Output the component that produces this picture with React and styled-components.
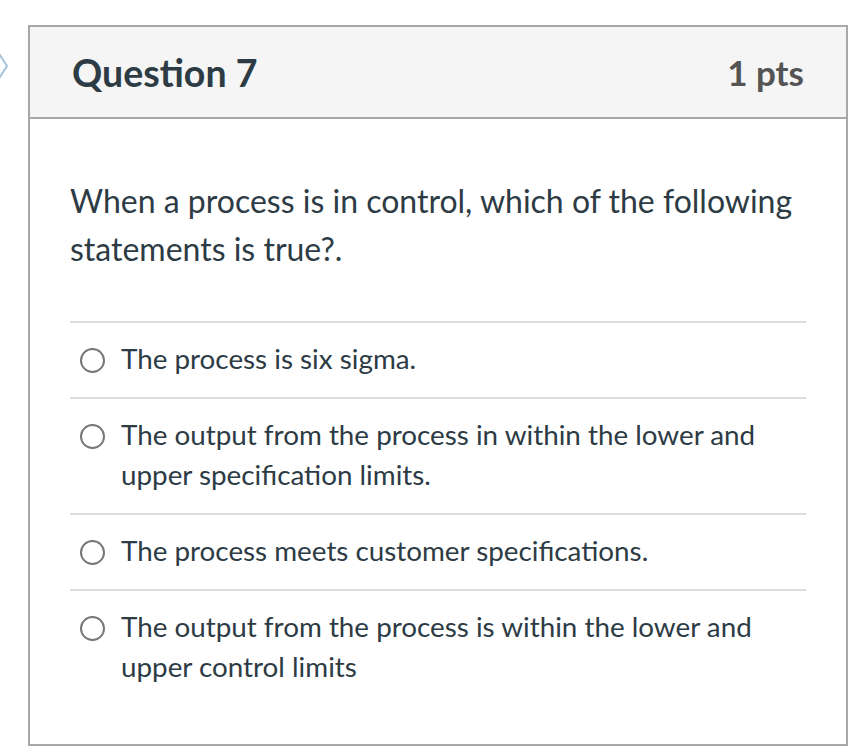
import React from "react";
import styled, { createGlobalStyle } from "styled-components";

const Global = createGlobalStyle`
  html, body { margin: 0; padding: 0; background: #fff; }
  body { font-family: Lato, "Open Sans", sans-serif; color: #2d3b45; }
`;

const Page = styled.div`
  position: relative;
  padding: 25px 0 0 28px;
  width: 854px;
  height: 756px;
  box-sizing: border-box;
`;

const Chevron = styled.svg`
  position: absolute;
  left: -4px;
  top: 50px;
`;

const Card = styled.div`
  width: 820px;
  border: 2px solid #a8a8a8;
  box-sizing: border-box;
`;

const Header = styled.div`
  display: flex;
  align-items: center;
  justify-content: space-between;
  height: 90px;
  padding: 0 42px;
  background: #f5f5f5;
  border-bottom: 2px solid #a8a8a8;
`;

const Title = styled.h2`
  margin: 0;
  font-size: 37.5px;
  font-weight: 700;
  color: #2d3b45;
`;

const Points = styled.div`
  font-size: 35px;
  font-weight: 700;
  color: #545454;
`;

const Body = styled.div`
  padding: 58px 40px 39px;
`;

const QuestionText = styled.p`
  margin: 0 0 48px;
  font-size: 32px;
  line-height: 48px;
`;

const Answer = styled.label`
  display: flex;
  align-items: flex-start;
  gap: 16px;
  padding: 16px 0 18px 10px;
  border-top: 2px solid #dcdcdc;
  font-size: 27.8px;
  line-height: 40px;
`;

const Radio = styled.span`
  flex: none;
  width: 25px;
  height: 25px;
  margin-top: 9px;
  border: 2px solid #777;
  border-radius: 50%;
  box-sizing: border-box;
`;

const answers = [
  "The process is six sigma.",
  "The output from the process in within the lower and upper specification limits.",
  "The process meets customer specifications.",
  "The output from the process is within the lower and upper control limits",
];

export default function App() {
  return (
    <>
      <Global />
      <Page>
        <Chevron width="14" height="32" viewBox="0 0 14 32">
          <polyline points="2,2 11,16 2,30" fill="none" stroke="#a9c4d8" strokeWidth="2" />
        </Chevron>
        <Card>
          <Header>
            <Title>Question 7</Title>
            <Points>1 pts</Points>
          </Header>
          <Body>
            <QuestionText>
              When a process is in control, which of the following statements is true?.
            </QuestionText>
            {answers.map((a) => (
              <Answer key={a}>
                <Radio />
                <span>{a}</span>
              </Answer>
            ))}
          </Body>
        </Card>
      </Page>
    </>
  );
}
